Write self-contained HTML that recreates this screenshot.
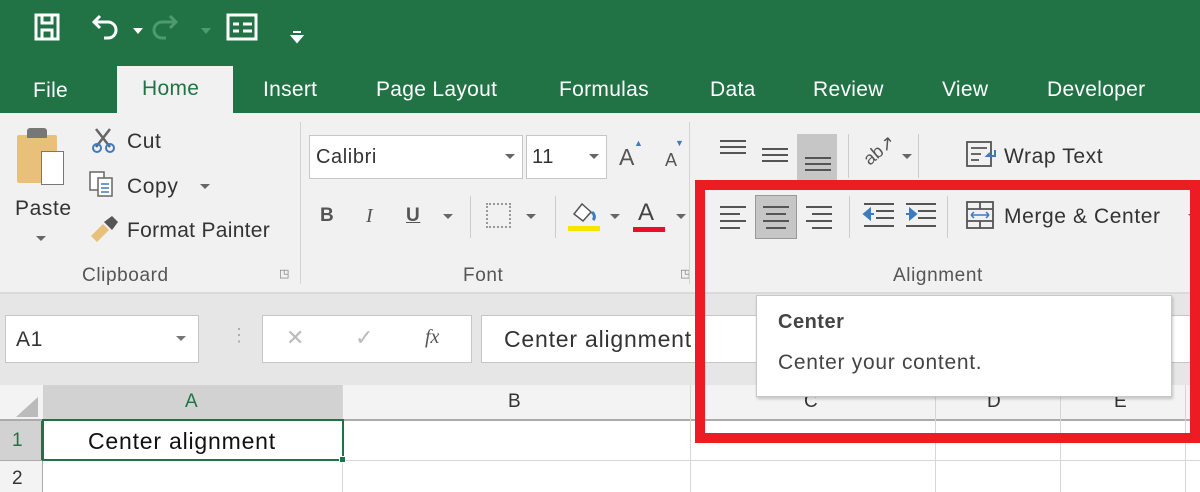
<!DOCTYPE html>
<html><head><meta charset="utf-8"><style>
*{margin:0;padding:0;box-sizing:border-box}
body{width:1200px;height:492px;overflow:hidden;position:relative;font-family:"Liberation Sans",sans-serif;background:#fff;color:#333}
.a{position:absolute;white-space:nowrap}
.t{font-size:21px;color:#fff;letter-spacing:.3px}
.r{font-size:21px;color:#333;letter-spacing:.6px}
.g{font-size:19px;color:#555;letter-spacing:.6px}
.sep{position:absolute;width:1px;background:#d4d4d4}
.ln{position:absolute;height:2px;background:#555}
.dd{position:absolute;width:0;height:0;border-left:5px solid transparent;border-right:5px solid transparent;border-top:5px solid #666}
</style></head><body>
<div class="a" style="left:0;top:0;width:1200px;height:113px;background:#217346"></div>
<svg class="a" style="left:30px;top:10px" width="290" height="40" viewBox="0 0 290 40">
<g fill="none" stroke="#fff" stroke-width="3">
<rect x="6" y="5" width="22" height="24"/><rect x="12" y="5" width="10" height="8"/><rect x="12" y="20" width="10" height="9"/>
<path d="M66 12 h12 a8 8 0 0 1 0 16 h-4 M70 6 l-6 6 6 6"/>
<path d="M144 12 h-12 a8 8 0 0 0 0 16 h4 M140 6 l6 6 -6 6" stroke="#4d9a70"/>
<rect x="198" y="5" width="28" height="24"/><path d="M203 14h6M213 14h9M203 21h6M213 21h9"/>
</g>
<path d="M103 18l5 6 5-6z" fill="#fff"/><path d="M171 18l5 6 5-6z" fill="#4d9a70"/>
<path d="M263 22h8M262 26l5 6 5-6z" stroke="#fff" stroke-width="2" fill="#fff"/>
</svg>
<div class="a" style="left:117px;top:66px;width:116px;height:50px;background:#f1f1f1"></div>
<span class="a t" style="left:33px;top:79px">File</span>
<span class="a t" style="left:142px;top:77px;color:#217346">Home</span>
<span class="a t" style="left:263px;top:78px">Insert</span>
<span class="a t" style="left:376px;top:78px">Page Layout</span>
<span class="a t" style="left:559px;top:78px">Formulas</span>
<span class="a t" style="left:710px;top:78px">Data</span>
<span class="a t" style="left:813px;top:78px">Review</span>
<span class="a t" style="left:942px;top:78px">View</span>
<span class="a t" style="left:1047px;top:78px">Developer</span>
<div class="a" style="left:0;top:113px;width:1200px;height:180px;background:#f1f1f1"></div>
<div class="a" style="left:0;top:292px;width:1200px;height:2px;background:#dadada"></div>
<div class="a" style="left:17px;top:135px;width:40px;height:48px;background:#e9c07a;border-radius:2px"></div>
<div class="a" style="left:27px;top:128px;width:20px;height:10px;background:#777;border-radius:3px 3px 0 0"></div>
<div class="a" style="left:41px;top:151px;width:23px;height:34px;background:#fff;border:1px solid #777"></div>
<span class="a r" style="left:15px;top:197px">Paste</span>
<div class="dd" style="left:36px;top:236px"></div>
<svg class="a" style="left:90px;top:125px" width="30" height="30"><path d="M6 4l14 18M20 4L6 22" stroke="#666" stroke-width="2.5"/><circle cx="7" cy="23" r="4" fill="none" stroke="#3d7bbf" stroke-width="2"/><circle cx="20" cy="23" r="4" fill="none" stroke="#3d7bbf" stroke-width="2"/></svg>
<span class="a r" style="left:127px;top:130px">Cut</span>
<svg class="a" style="left:88px;top:170px" width="30" height="30"><rect x="2" y="2" width="14" height="18" fill="#fff" stroke="#666" stroke-width="1.5"/><rect x="10" y="8" width="14" height="18" fill="#fff" stroke="#666" stroke-width="1.5"/><path d="M13 14h8M13 18h8M13 22h8" stroke="#3d7bbf" stroke-width="1.5"/></svg>
<span class="a r" style="left:127px;top:175px">Copy</span>
<div class="dd" style="left:200px;top:184px"></div>
<svg class="a" style="left:88px;top:214px" width="32" height="30"><path d="M3 22l12-12 6 6-12 12z" fill="#e9c07a"/><path d="M16 8l8-6 6 6-6 8z" fill="#555"/></svg>
<span class="a r" style="left:127px;top:219px;letter-spacing:0.3px">Format Painter</span>
<span class="a g" style="left:82px;top:265px">Clipboard</span>
<span class="a" style="left:279px;top:267px;font-size:11px;color:#777">◳</span>
<div class="sep" style="left:300px;top:122px;height:162px"></div>
<div class="a" style="left:309px;top:135px;width:214px;height:44px;background:#fff;border:1px solid #c6c6c6"></div>
<span class="a r" style="left:316px;top:146px;font-size:20px">Calibri</span>
<div class="dd" style="left:505px;top:154px"></div>
<div class="a" style="left:526px;top:135px;width:81px;height:44px;background:#fff;border:1px solid #c6c6c6"></div>
<span class="a r" style="left:532px;top:146px;font-size:20px">11</span>
<div class="dd" style="left:589px;top:154px"></div>
<span class="a r" style="left:619px;top:144px;font-size:23px;color:#555">A</span>
<span class="a" style="left:634px;top:138px;font-size:9px;color:#3d7bbf">▲</span>
<span class="a r" style="left:665px;top:150px;font-size:18px;color:#555">A</span>
<span class="a" style="left:675px;top:138px;font-size:9px;color:#3d7bbf">▼</span>
<span class="a r" style="left:320px;top:205px;font-weight:bold;font-size:19px;color:#555">B</span>
<span class="a r" style="left:366px;top:205px;font-style:italic;font-size:20px;color:#555;font-family:'Liberation Serif'">I</span>
<span class="a r" style="left:406px;top:205px;text-decoration:underline;font-weight:bold;font-size:19px;color:#555">U</span>
<div class="dd" style="left:443px;top:214px"></div>
<div class="sep" style="left:470px;top:196px;height:42px;background:#ccc"></div>
<div class="a" style="left:486px;top:203px;width:25px;height:25px;border:2px dotted #999"></div>
<div class="dd" style="left:526px;top:214px"></div>
<div class="sep" style="left:555px;top:196px;height:42px;background:#ccc"></div>
<svg class="a" style="left:568px;top:198px" width="32" height="34"><path d="M6 16l8-10 9 8-8 9z" fill="#fff" stroke="#555" stroke-width="1.5"/><path d="M24 14c3 3 3 6 1 8" stroke="#3d7bbf" stroke-width="3" fill="none"/><rect x="0" y="28" width="32" height="5" fill="#f5e600"/></svg>
<div class="dd" style="left:610px;top:214px"></div>
<span class="a" style="left:638px;top:199px;font-size:24px;color:#444">A</span>
<div class="a" style="left:633px;top:227px;width:32px;height:5px;background:#e81123"></div>
<div class="dd" style="left:676px;top:214px"></div>
<span class="a g" style="left:463px;top:265px">Font</span>
<span class="a" style="left:680px;top:267px;font-size:11px;color:#777">◳</span>
<div class="sep" style="left:689px;top:122px;height:162px"></div>
<div class="ln" style="left:720px;top:140px;width:26px"></div><div class="ln" style="left:720px;top:146px;width:26px"></div><div class="ln" style="left:720px;top:152px;width:26px"></div>
<div class="ln" style="left:762px;top:148px;width:26px"></div><div class="ln" style="left:762px;top:154px;width:26px"></div><div class="ln" style="left:762px;top:160px;width:26px"></div>
<div class="a" style="left:797px;top:134px;width:40px;height:46px;background:#c6c6c6"></div>
<div class="ln" style="left:805px;top:157px;width:26px"></div><div class="ln" style="left:805px;top:163px;width:26px"></div><div class="ln" style="left:805px;top:169px;width:26px"></div>
<div class="sep" style="left:848px;top:134px;height:44px;background:#ccc"></div>
<span class="a" style="left:862px;top:140px;font-size:18px;color:#555;transform:rotate(-40deg)">ab↗</span>
<div class="dd" style="left:902px;top:154px"></div>
<div class="sep" style="left:918px;top:134px;height:44px;background:#ccc"></div>
<svg class="a" style="left:965px;top:140px" width="34" height="30"><g fill="none" stroke="#555" stroke-width="1.8"><rect x="2" y="2" width="24" height="24"/><path d="M6 8h16M6 14h10M6 20h8"/></g><path d="M30 10v6h-8l3-3" stroke="#3d7bbf" stroke-width="2" fill="none"/></svg>
<span class="a r" style="left:1004px;top:145px">Wrap Text</span>
<div class="ln" style="left:720px;top:206px;width:26px"></div><div class="ln" style="left:720px;top:213px;width:20px"></div><div class="ln" style="left:720px;top:220px;width:26px"></div><div class="ln" style="left:720px;top:227px;width:20px"></div>
<div class="a" style="left:755px;top:195px;width:42px;height:44px;background:#c6c6c6;border:1px solid #999"></div>
<div class="ln" style="left:763px;top:206px;width:26px"></div><div class="ln" style="left:766px;top:213px;width:20px"></div><div class="ln" style="left:763px;top:220px;width:26px"></div><div class="ln" style="left:766px;top:227px;width:20px"></div>
<div class="ln" style="left:806px;top:206px;width:26px"></div><div class="ln" style="left:812px;top:213px;width:20px"></div><div class="ln" style="left:806px;top:220px;width:26px"></div><div class="ln" style="left:812px;top:227px;width:20px"></div>
<div class="sep" style="left:849px;top:196px;height:42px;background:#ccc"></div>
<svg class="a" style="left:862px;top:202px" width="34" height="28"><path d="M2 2h30M14 9h18M14 16h18M2 24h30" stroke="#555" stroke-width="2"/><path d="M2 12l6-5v10z M6 12h6" fill="#3d7bbf" stroke="#3d7bbf" stroke-width="2"/></svg>
<svg class="a" style="left:904px;top:202px" width="34" height="28"><path d="M2 2h30M14 9h18M14 16h18M2 24h30" stroke="#555" stroke-width="2"/><path d="M12 12l-6-5v10z M2 12h6" fill="#3d7bbf" stroke="#3d7bbf" stroke-width="2"/></svg>
<div class="sep" style="left:947px;top:196px;height:42px;background:#ccc"></div>
<svg class="a" style="left:965px;top:200px" width="30" height="32"><g fill="none" stroke="#555" stroke-width="1.8"><rect x="2" y="2" width="26" height="26"/><path d="M2 9h26M2 21h26M15 2v7M15 21v7"/></g><path d="M6 15h18M6 15l3-3M6 15l3 3M24 15l-3-3M24 15l-3 3" stroke="#3d7bbf" stroke-width="1.5"/></svg>
<span class="a r" style="left:1004px;top:205px">Merge &amp; Center</span>
<div class="dd" style="left:1188px;top:214px"></div>
<span class="a g" style="left:893px;top:265px">Alignment</span>
<div class="a" style="left:0;top:294px;width:1200px;height:91px;background:#e6e6e6"></div>
<div class="a" style="left:5px;top:315px;width:194px;height:48px;background:#fff;border:1px solid #c6c6c6"></div>
<span class="a r" style="left:16px;top:328px">A1</span>
<div class="dd" style="left:176px;top:336px;border-top-color:#777"></div>
<span class="a" style="left:230px;top:325px;font-size:18px;color:#aaa">⋮</span>
<div class="a" style="left:262px;top:315px;width:210px;height:48px;background:#fff;border:1px solid #c6c6c6"></div>
<span class="a" style="left:286px;top:325px;font-size:22px;color:#bbb">✕</span>
<span class="a" style="left:355px;top:325px;font-size:22px;color:#bbb">✓</span>
<span class="a" style="left:425px;top:326px;font-size:20px;color:#555;font-family:'Liberation Serif';font-style:italic">fx</span>
<div class="a" style="left:481px;top:315px;width:720px;height:48px;background:#fff;border:1px solid #c6c6c6"></div>
<span class="a r" style="left:504px;top:326px;font-size:23px;letter-spacing:.8px">Center alignment</span>
<div class="a" style="left:0;top:385px;width:1200px;height:36px;background:#f3f3f3;border-bottom:2px solid #ababab"></div>
<div class="a" style="left:43px;top:385px;width:299px;height:36px;background:#d2d2d2;border-bottom:2px solid #217346"></div>
<svg class="a" style="left:12px;top:395px" width="30" height="24"><path d="M26 2v20H4z" fill="#bbb"/></svg>
<span class="a" style="left:185px;top:391px;font-size:19px;color:#217346">A</span>
<span class="a" style="left:508px;top:391px;font-size:19px;color:#333">B</span>
<span class="a" style="left:804px;top:391px;font-size:19px;color:#333">C</span>
<span class="a" style="left:987px;top:391px;font-size:19px;color:#333">D</span>
<span class="a" style="left:1114px;top:391px;font-size:19px;color:#333">E</span>
<div class="a" style="left:0;top:421px;width:43px;height:71px;background:#f3f3f3;border-right:1px solid #ababab"></div>
<div class="a" style="left:0;top:421px;width:43px;height:39px;background:#d2d2d2;border-right:2px solid #217346"></div>
<span class="a" style="left:12px;top:430px;font-size:19px;color:#217346">1</span>
<span class="a" style="left:12px;top:468px;font-size:19px;color:#333">2</span>
<div class="a" style="left:43px;top:460px;width:1157px;height:1px;background:#d6d6d6"></div>
<div class="a" style="left:0;top:460px;width:43px;height:1px;background:#ababab"></div>
<div class="sep" style="left:342px;top:385px;height:107px;background:#d6d6d6"></div>
<div class="sep" style="left:690px;top:385px;height:107px;background:#d6d6d6"></div>
<div class="sep" style="left:935px;top:385px;height:107px;background:#d6d6d6"></div>
<div class="sep" style="left:1060px;top:385px;height:107px;background:#d6d6d6"></div>
<div class="sep" style="left:1185px;top:385px;height:107px;background:#d6d6d6"></div>
<div class="a" style="left:42px;top:419px;width:302px;height:42px;border:2px solid #217346"></div>
<div class="a" style="left:339px;top:456px;width:7px;height:7px;background:#217346;border:1px solid #fff"></div>
<span class="a" style="left:88px;top:428px;font-size:23px;color:#111;letter-spacing:.8px">Center alignment</span>
<div class="a" style="left:756px;top:295px;width:416px;height:102px;background:#fff;border:1px solid #c8c8c8;box-shadow:1px 2px 3px rgba(0,0,0,.2)"></div>
<span class="a" style="left:778px;top:311px;font-size:20px;font-weight:bold;color:#444;letter-spacing:.5px">Center</span>
<span class="a" style="left:778px;top:351px;font-size:21px;color:#444;letter-spacing:.7px">Center your content.</span>
<div class="a" style="left:695px;top:180px;width:505px;height:263px;border:10px solid #ed1c24"></div>
</body></html>
